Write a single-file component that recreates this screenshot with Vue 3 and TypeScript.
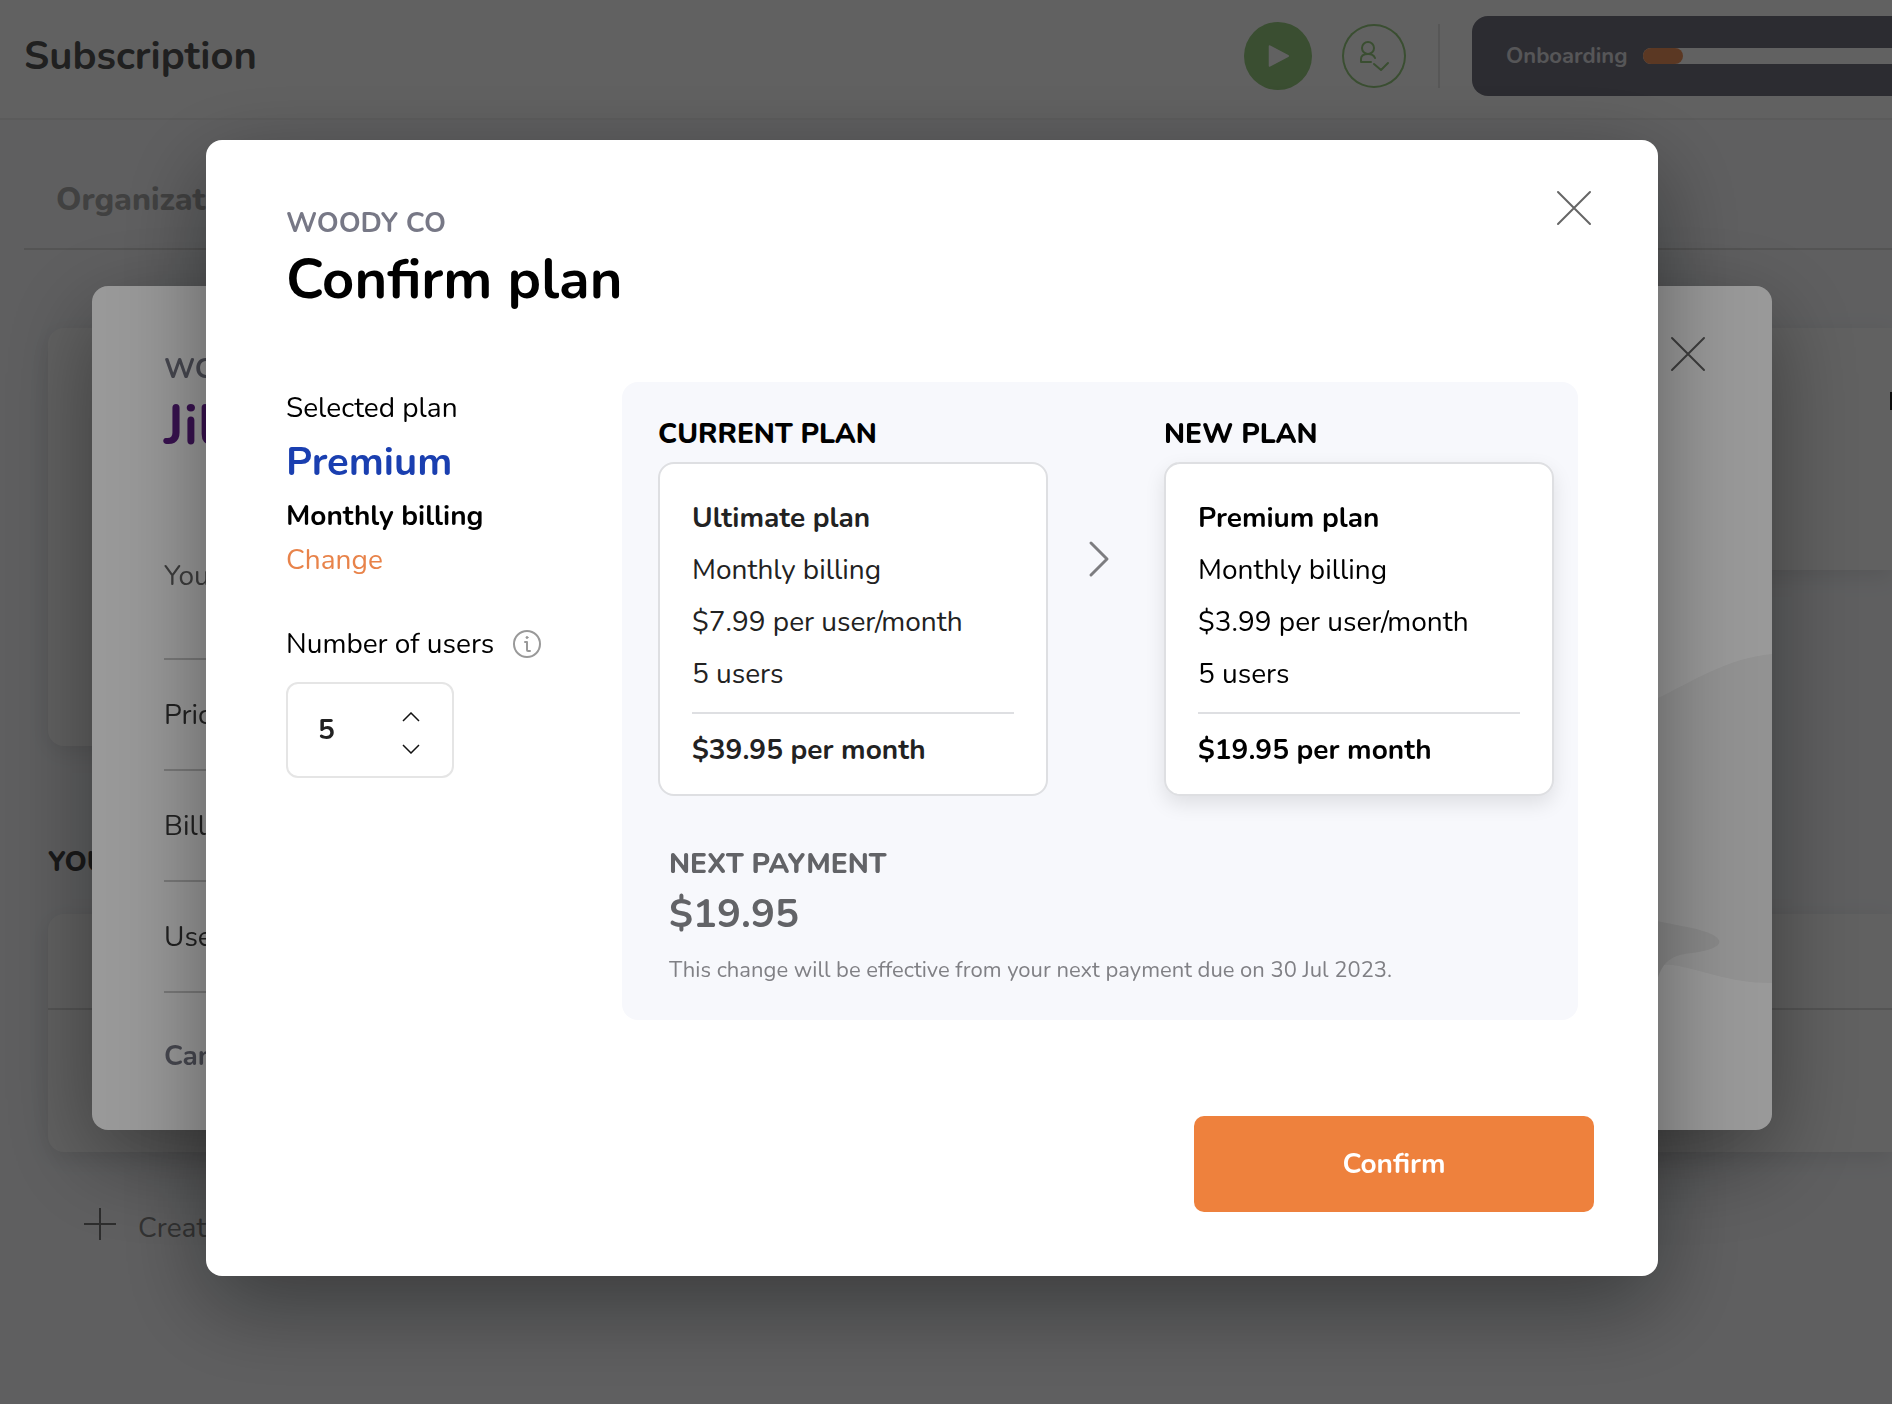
<script setup lang="ts">
import { ref } from 'vue'

interface Plan {
  heading: string
  name: string
  billing: string
  price: string
  users: string
  total: string
  isNew: boolean
}

const users = ref<number>(5)

const current: Plan = {
  heading: 'CURRENT PLAN',
  name: 'Ultimate plan',
  billing: 'Monthly billing',
  price: '$7.99 per user/month',
  users: '5 users',
  total: '$39.95 per month',
  isNew: false,
}

const next: Plan = {
  heading: 'NEW PLAN',
  name: 'Premium plan',
  billing: 'Monthly billing',
  price: '$3.99 per user/month',
  users: '5 users',
  total: '$19.95 per month',
  isNew: true,
}

const rows: string[] = ['Price', 'Billing', 'Users']

function step(delta: number): void {
  users.value = Math.max(1, users.value + delta)
}
</script>

<template>
  <div class="app">
    <header class="topbar">
      <h1 class="page-title">Subscription</h1>
      <div class="tools">
        <button class="play" type="button" aria-label="Play">
          <svg width="68" height="68" viewBox="0 0 66 66"><path d="M24 23.500Q24 22 25.500 22.800L43 32Q44.500 33 43 34L25.500 43.200Q24 44 24 42.500Z" fill="#fff" /></svg>
        </button>
        <button class="person" type="button" aria-label="Account">
          <svg width="64" height="64" viewBox="0 0 64 64" fill="none" stroke="#98cc80" stroke-width="2" stroke-linecap="round" stroke-linejoin="round">
            <circle cx="26" cy="24" r="6" />
            <path d="M29 38H19V35C19 31 22 30 26 30C30 30 32 31.500 33 34M32 40L39 46L46 39" />
          </svg>
        </button>
        <span class="divider"></span>
        <div class="onboarding">
          <span>Onboarding</span>
          <div class="track"><div class="fill"></div></div>
        </div>
      </div>
    </header>

    <main class="content">
      <nav class="tabs"><a href="#" class="tab">Organization</a></nav>
      <div class="cards">
        <section class="card tall"></section>
        <section class="card short"><i class="edge"></i></section>
      </div>
      <h2 class="section">YOUR</h2>
      <section class="card list"><div class="list-head"></div></section>
      <button class="create" type="button">
        <svg width="32" height="32" viewBox="0 0 32 32" stroke="#777" stroke-width="2"><path d="M16 0V32M0 16H32" /></svg>
        <span>Create</span>
      </button>
    </main>

    <div class="overlay back">
      <section class="modal details">
        <svg class="blob" width="260" height="340" viewBox="0 0 260 340">
          <path d="M0 118C60 90 100 70 146 52C180 36 215 12 260 8V337C215 337 190 323 160 319C130 317 60 330 0 330Z" fill="#f3f3f3" />
          <path d="M80 264C110 268 150 276 180 282C215 290 218 302 180 307C155 309 150 320 145 334H60Z" fill="#e4e4e4" />
        </svg>
        <p class="eyebrow">WOODY CO</p>
        <h2 class="modal-title purple">Jill</h2>
        <button class="close" type="button" aria-label="Close details">
          <svg width="40" height="40" viewBox="0 0 40 40" stroke="#666" stroke-width="2" stroke-linecap="round"><path d="M4 4L36 36M36 4L4 36" /></svg>
        </button>
        <p class="intro">Your</p>
        <ul class="rows">
          <li v-for="row in rows" :key="row">{{ row }}</li>
        </ul>
        <a href="#" class="cancel">Cancel</a>
      </section>
    </div>

    <div class="overlay front">
      <section class="modal confirm" role="dialog" aria-label="Confirm plan">
        <p class="eyebrow">WOODY CO</p>
        <h2 class="modal-title">Confirm plan</h2>
        <button class="close" type="button" aria-label="Close">
          <svg width="40" height="40" viewBox="0 0 40 40" stroke="#666" stroke-width="2" stroke-linecap="round"><path d="M4 4L36 36M36 4L4 36" /></svg>
        </button>

        <div class="body">
          <div class="selection">
            <p>Selected plan</p>
            <h3 class="plan-name">Premium</h3>
            <p class="bold">Monthly billing</p>
            <a href="#" class="change">Change</a>
            <div class="users-label">
              <label for="users">Number of users</label>
              <svg width="30" height="30" viewBox="0 0 30 30" fill="none" stroke="#999" stroke-width="2" stroke-linecap="round" stroke-linejoin="round">
                <circle cx="15" cy="15" r="13" />
                <path d="M13 13H15V21Q15 22 16 22H18" />
                <circle cx="15" cy="8.500" r="1" fill="#999" stroke-width="1" />
              </svg>
            </div>
            <div class="stepper">
              <input id="users" v-model="users" type="text" inputmode="numeric" />
              <div class="arrows">
                <button type="button" aria-label="More users" @click="step(1)">
                  <svg width="18" height="10" viewBox="0 0 18 10" fill="none" stroke="#111" stroke-width="1.500"><path d="M1 9L9 1L17 9" /></svg>
                </button>
                <button type="button" aria-label="Fewer users" @click="step(-1)">
                  <svg width="18" height="10" viewBox="0 0 18 10" fill="none" stroke="#111" stroke-width="1.500"><path d="M1 1L9 9L17 1" /></svg>
                </button>
              </div>
            </div>
          </div>

          <div class="panel">
            <div class="compare">
              <template v-for="plan in [current, next]" :key="plan.heading">
                <svg v-if="plan.isNew" class="chevron" width="22" height="38" viewBox="0 0 22 38" fill="none" stroke="#7d7d80" stroke-width="3" stroke-linecap="round" stroke-linejoin="round"><path d="M3 3L19 19L3 35" /></svg>
                <section>
                  <h4 class="heading">{{ plan.heading }}</h4>
                  <div class="plan" :class="{ fresh: plan.isNew }">
                    <p class="bold">{{ plan.name }}</p>
                    <p>{{ plan.billing }}</p>
                    <p>{{ plan.price }}</p>
                    <p>{{ plan.users }}</p>
                    <p class="bold total">{{ plan.total }}</p>
                  </div>
                </section>
              </template>
            </div>
            <div class="payment">
              <h4>NEXT PAYMENT</h4>
              <p class="amount">$19.95</p>
              <p class="note">This change will be effective from your next payment due on 30 Jul 2023.</p>
            </div>
          </div>
        </div>

        <button class="submit" type="button">Confirm</button>
      </section>
    </div>
  </div>
</template>

<style>
body {
  margin: 0;
}
</style>

<style scoped>
.app {
  min-height: 100vh;
  overflow: hidden;
  background: #f9fafd;
  color: #222;
  font-family: Nunito, "Open Sans", sans-serif;
  font-size: 28px;
  line-height: 44px;
}

.app *,
.app *::before {
  box-sizing: border-box;
}

h1, h2, h3, h4, p, ul {
  margin: 0;
  padding: 0;
}

a {
  text-decoration: none;
}

button {
  padding: 0;
  border: 0;
  background: none;
  color: inherit;
  font: inherit;
  cursor: pointer;
}

svg {
  display: block;
  flex: none;
}

.topbar {
  display: flex;
  align-items: center;
  justify-content: space-between;
  height: 120px;
  padding: 0 0 6px 24px;
  border-bottom: 2px solid #f0f0f0;
  background: #fff;
}

.page-title {
  font-size: 40px;
  font-weight: 700;
  color: #555;
}

.tools {
  display: flex;
  align-items: center;
}

.play {
  border-radius: 50%;
  background: #98cc80;
}

.person {
  margin-left: 30px;
  border-radius: 50%;
  box-shadow: inset 0 0 0 2px #98cc80;
}

.divider {
  width: 2px;
  height: 64px;
  margin: 0 32px;
  background: #e5e5e5;
}

.onboarding {
  display: flex;
  align-items: center;
  gap: 16px;
  width: 420px;
  height: 80px;
  padding-left: 34px;
  border-radius: 16px 0 0 16px;
  background: #747480;
  color: #e2e2e6;
  font-size: 22px;
  font-weight: 700;
}

.track {
  flex: 1;
  height: 16px;
  border-radius: 8px 0 0 8px;
  background: #fff;
}

.fill {
  width: 40px;
  height: 16px;
  border-radius: 8px;
  background: #f0935c;
}

.tabs {
  margin-left: 24px;
  padding: 58px 32px 26px;
  border-bottom: 2px solid #dcdcdc;
}

.tab {
  display: block;
  color: #aaa;
  font-size: 32px;
  font-weight: 800;
}

.cards {
  display: flex;
  align-items: flex-start;
  gap: 48px;
  margin: 78px 0 0 48px;
}

.card {
  border-radius: 16px 0 0 16px;
  background: #fff;
  box-shadow: 0 6px 24px rgba(0, 0, 0, 0.1);
}

.tall {
  flex: 2;
  height: 418px;
  border-radius: 16px;
}

.short {
  display: flex;
  flex: 1;
  justify-content: flex-end;
  height: 242px;
  padding-top: 64px;
}

.edge {
  width: 2px;
  height: 18px;
  background: #222;
}

.section {
  margin: 94px 0 30px 48px;
  color: #444;
  font-size: 28px;
  font-weight: 800;
}

.list {
  height: 238px;
  margin-left: 48px;
}

.list-head {
  height: 96px;
  border-bottom: 2px solid #dcdcdc;
}

.create {
  display: flex;
  align-items: center;
  gap: 22px;
  margin: 54px 0 0 84px;
  color: #888;
}

.create svg {
  margin-bottom: 8px;
}

.overlay {
  position: fixed;
  inset: 0;
  display: flex;
  align-items: center;
  justify-content: center;
  padding: 12px 28px 0 0;
}

.back {
  background: rgba(0, 0, 0, 0.37);
}

.front {
  background: rgba(0, 0, 0, 0.4);
}

.modal {
  position: relative;
  width: 100%;
  border-radius: 16px;
  background: #fff;
  box-shadow: 0 28px 90px rgba(0, 0, 0, 0.4);
}

.details {
  max-width: 1680px;
  padding: 64px 72px 52px;
  color: #3a3a3a;
}

.blob {
  position: absolute;
  right: 0;
  bottom: 144px;
}

.confirm {
  max-width: 1452px;
  padding: 64px 64px 64px 80px;
  color: #000;
}

.eyebrow {
  color: #777886;
  font-weight: 700;
  line-height: 38px;
}

.modal-title {
  font-size: 56px;
  font-weight: 700;
  line-height: 76px;
}

.purple {
  color: #5f1f85;
}

.close {
  position: absolute;
  top: 48px;
  right: 64px;
}

.intro {
  margin-top: 90px;
  color: #666;
}

.rows {
  max-width: 1200px;
  margin-top: 60px;
  border-top: 2px solid #ccc;
  list-style: none;
}

.rows li {
  padding: 33px 0 32px;
  border-bottom: 2px solid #ccc;
}

.cancel {
  display: block;
  margin-top: 41px;
  color: #777886;
  font-weight: 700;
}

.body {
  display: flex;
  justify-content: space-between;
  margin-top: 64px;
  padding-right: 16px;
}

.selection {
  padding-top: 4px;
}

.bold {
  font-weight: 700;
}

.plan-name {
  color: #1a3fb0;
  font-size: 40px;
  font-weight: 700;
  line-height: 64px;
}

.change {
  display: block;
  color: #e8834a;
}

.users-label {
  display: flex;
  align-items: center;
  gap: 18px;
  margin-top: 40px;
}

.stepper {
  display: flex;
  align-items: center;
  justify-content: space-between;
  width: 168px;
  height: 96px;
  margin-top: 16px;
  padding: 0 32px 0 30px;
  border: 2px solid #e5e5e5;
  border-radius: 12px;
}

.stepper input {
  width: 64px;
  padding: 0;
  border: 0;
  outline: 0;
  background: none;
  color: #222;
  font: inherit;
  font-weight: 700;
}

.arrows {
  display: flex;
  flex-direction: column;
  gap: 22px;
  padding-top: 6px;
}

.panel {
  width: 956px;
  padding: 34px 24px 34px 36px;
  border-radius: 16px;
  background: #f7f8fc;
}

.compare {
  display: grid;
  grid-template-columns: 1fr 116px 1fr;
}

.chevron {
  margin: 124px 0 0 40px;
}

.heading {
  margin-bottom: 10px;
  font-size: 28px;
  font-weight: 800;
  line-height: 36px;
}

.plan {
  padding: 28px 32px 18px;
  border: 2px solid #dedfe2;
  border-radius: 16px;
  background: #fff;
  color: #222;
  line-height: 52px;
}

.fresh {
  color: #000;
  box-shadow: 0 8px 20px rgba(0, 0, 0, 0.1);
}

.total {
  margin-top: 12px;
  padding-top: 10px;
  border-top: 2px solid #dedfe2;
}

.payment {
  margin-top: 50px;
  padding-left: 11px;
  color: #626367;
}

.payment h4 {
  font-size: 28px;
  font-weight: 800;
  line-height: 36px;
}

.amount {
  font-size: 40px;
  font-weight: 700;
  line-height: 64px;
}

.note {
  margin-top: 8px;
  color: #808085;
  font-size: 22px;
  line-height: 32px;
}

.submit {
  display: block;
  width: 400px;
  height: 96px;
  margin: 96px 0 0 auto;
  border-radius: 10px;
  background: #ee813d;
  color: #fff;
  font-weight: 700;
}
</style>
